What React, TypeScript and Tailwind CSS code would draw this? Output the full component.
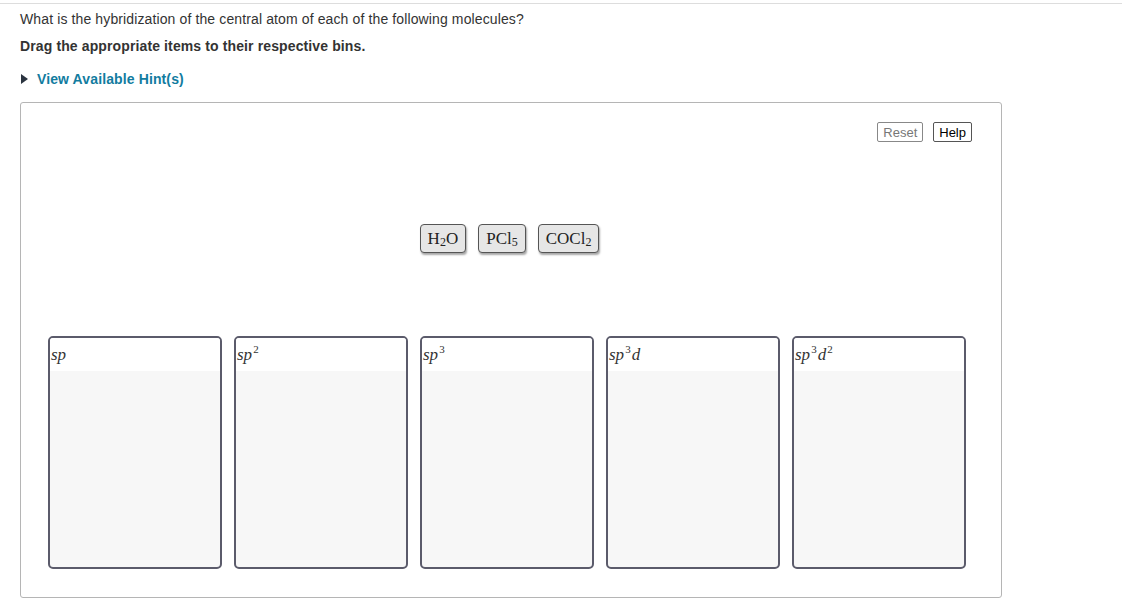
import React from "react";

const Sub = ({ children }: { children: React.ReactNode }) => (
  <span className="text-[12px] relative top-[3px] leading-none">{children}</span>
);
const Sup = ({ children }: { children: React.ReactNode }) => (
  <span className="text-[11px] relative top-[-5px] leading-none not-italic ml-[1px] mr-[1px]">{children}</span>
);

const Chip = ({ children }: { children: React.ReactNode }) => (
  <div className="h-[29px] px-[7px] flex items-center bg-[#e6e6e6] border border-[#555] rounded-[4px] shadow-[1px_2px_2px_rgba(0,0,0,0.35)] text-[17px] text-[#222] font-['Liberation_Serif','DejaVu_Serif',serif]">
    {children}
  </div>
);

const Bin = ({ label }: { label: React.ReactNode }) => (
  <div className="w-[174px] h-[233px] border-2 border-[#5b5b6b] rounded-[5px] bg-[#f7f7f7] overflow-hidden">
    <div className="h-[33px] bg-white flex items-center pl-[1px] italic text-[17px] text-[#333] font-['Liberation_Serif','DejaVu_Serif',serif]">
      {label}
    </div>
  </div>
);

export default function App() {
  return (
    <div className="w-[1122px] h-[602px] bg-white overflow-hidden font-['Liberation_Sans',Arial,sans-serif] text-[14px] tracking-[0.12px] text-[#333]">
      <div className="mt-[3px] border-t border-[#ddd]" />
      <div className="px-[20px]">
        <p className="mt-[7px] leading-[16px]">
          What is the hybridization of the central atom of each of the following molecules?
        </p>
        <p className="mt-[11px] leading-[16px] font-bold">
          Drag the appropriate items to their respective bins.
        </p>
        <div className="mt-[17px] h-[16px] flex items-center">
          <svg width="7" height="10" viewBox="0 0 7 10" className="ml-[1px]">
            <polygon points="0,0 7,5 0,10" fill="#2b3440" />
          </svg>
          <span className="ml-[9px] font-bold text-[#127c9f] leading-[16px]">View Available Hint(s)</span>
        </div>
        <div className="mt-[15px] w-[982px] h-[496px] border border-[#b5b5b5] rounded-[3px]">
          <div className="flex justify-end gap-[10px] pt-[19px] pr-[29px]">
            <button className="h-[20px] px-[5px] border border-[#888] rounded-[2px] text-[13px] tracking-normal text-[#777] leading-none">
              Reset
            </button>
            <button className="h-[20px] px-[5px] border border-[#555] rounded-[2px] text-[13px] tracking-normal text-black leading-none">
              Help
            </button>
          </div>
          <div className="mt-[82px] flex justify-center gap-[12px] tracking-normal pr-[3px]">
            <Chip>
              H<Sub>2</Sub>O
            </Chip>
            <Chip>
              PCl<Sub>5</Sub>
            </Chip>
            <Chip>
              COCl<Sub>2</Sub>
            </Chip>
          </div>
          <div className="mt-[83px] pl-[27px] flex gap-[12px] tracking-normal">
            <Bin label={<>sp</>} />
            <Bin label={<>sp<Sup>2</Sup></>} />
            <Bin label={<>sp<Sup>3</Sup></>} />
            <Bin label={<>sp<Sup>3</Sup>d</>} />
            <Bin label={<>sp<Sup>3</Sup>d<Sup>2</Sup></>} />
          </div>
        </div>
      </div>
    </div>
  );
}
